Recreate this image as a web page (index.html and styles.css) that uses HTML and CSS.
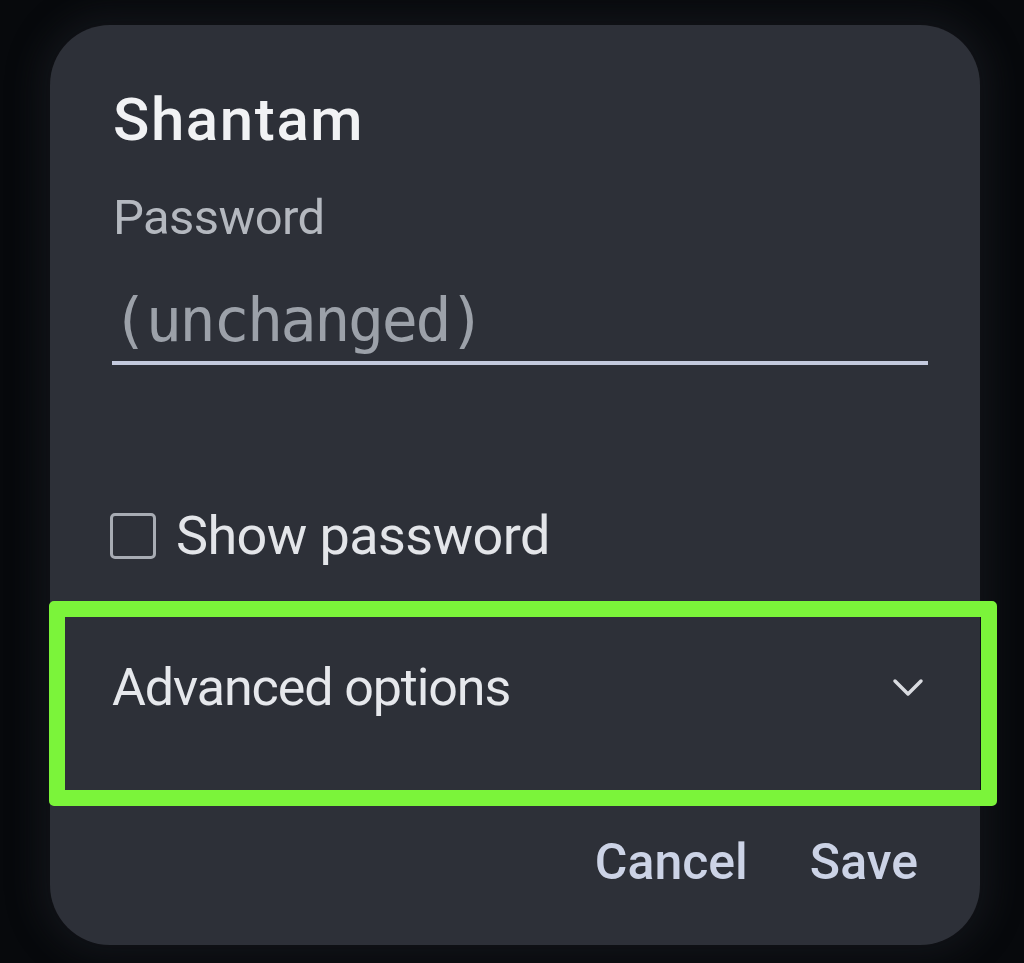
FILE: index.html
```html
<!DOCTYPE html>
<html lang="en">
  <head>
    <meta charset="UTF-8" />
    <meta name="viewport" content="width=device-width, initial-scale=1.0" />
    <title>Edit password</title>
    <link rel="stylesheet" href="styles.css">
  </head>
  <body>
    <div class="dialog">
      <h1 class="dialog-title">Shantam</h1>
      <label class="field-label" for="password">Password</label>
      <div class="field-input" id="password">(unchanged)</div>

      <label class="show-row">
        <span class="checkbox"></span>
        <span>Show password</span>
      </label>

      <div class="advanced">
        <span>Advanced options</span>
        <svg class="chevron" width="32" height="20" viewBox="0 0 32 20">
          <path d="M3 3 L16 16 L29 3" fill="none" stroke="#d9dbe0" stroke-width="3.5" stroke-linecap="round" stroke-linejoin="round" />
        </svg>
      </div>

      <div class="actions">
        <span class="btn">Cancel</span>
        <span class="btn">Save</span>
      </div>
    </div>
  </body>
</html>
```

FILE: styles.css
```css
body {
  margin: 0;
  padding: 0;
  background-color: #07090c;
  font-family: Roboto, "Noto Sans", sans-serif;
  height: 963px;
  overflow: hidden;
}

.dialog {
  box-sizing: border-box;
  width: 930px;
  height: 920px;
  margin: 25px 0 0 50px;
  padding: 65px 51px 0 63px;
  background-color: #2d3038;
  border-radius: 60px;
  box-shadow: 0 0 30px 14px rgba(28, 32, 38, 0.45);
  display: flex;
  flex-direction: column;
}

.dialog-title {
  margin: 0;
  font-size: 60px;
  line-height: 1;
  font-weight: 500;
  color: #f1f2f4;
  letter-spacing: 1.6px;
}

.field-label {
  margin-top: 43px;
  font-size: 49px;
  line-height: 1;
  letter-spacing: -0.6px;
  color: #b4b8bf;
}

.field-input {
  margin-top: 48px;
  padding-bottom: 11px;
  font-family: "DejaVu Sans Mono", monospace;
  font-size: 60px;
  line-height: 1;
  letter-spacing: -2.4px;
  color: #9ca1a9;
  border-bottom: 4px solid #c3c9dd;
  margin-right: 1px;
  margin-left: -1px;
}

.show-row {
  margin-top: 144px;
  display: flex;
  align-items: center;
  gap: 20px;
  font-size: 54px;
  line-height: 1;
  letter-spacing: -0.6px;
  color: #e3e5e9;
}

.checkbox {
  box-sizing: border-box;
  width: 46px;
  height: 46px;
  margin-left: -3px;
  border: 3px solid #a8acb4;
  border-radius: 5px;
}

.advanced {
  margin: 38px -68px 0 -64px;
  padding: 45px 57px 76px 47px;
  border: 16px solid #7bf43a;
  border-radius: 5px;
  display: flex;
  justify-content: space-between;
  align-items: center;
  font-size: 52px;
  line-height: 1;
  letter-spacing: -1.1px;
  color: #e6e8ec;
}

.chevron {
  display: block;
}

.actions {
  margin-top: 31px;
  margin-right: 11px;
  display: flex;
  justify-content: flex-end;
  gap: 62px;
}

.btn {
  font-size: 50px;
  line-height: 1;
  font-weight: 500;
  color: #ccd3e6;
}
```
